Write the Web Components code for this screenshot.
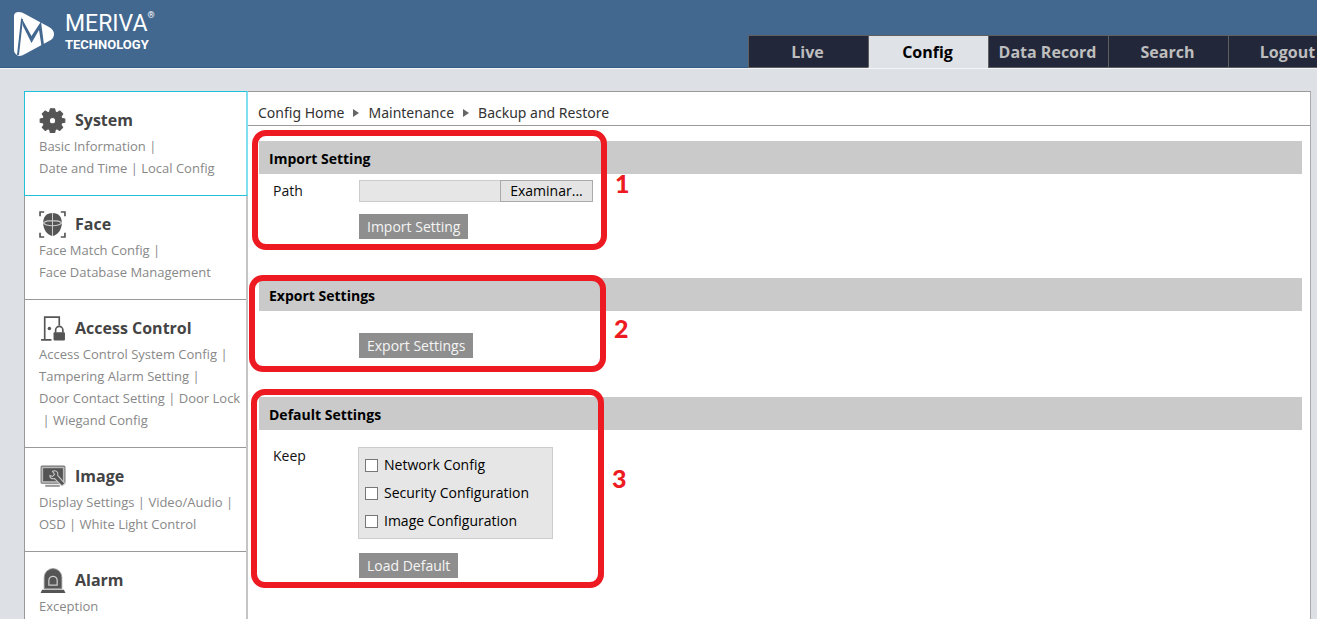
<!DOCTYPE html>
<html lang="en">
<head>
<meta charset="utf-8">
<title>Meriva Technology - Backup and Restore</title>
<style>
  html, body { height: 100%; }
  body {
    margin: 0; overflow: hidden; background: #dde0e5; color: #111;
    font: 14px/22px "Open Sans", "Noto Sans", sans-serif;
    display: flex; flex-direction: column;
  }
  config-layout { flex: 1; }
</style>
</head>
<body>
<app-header>
  <nav-tab>Live</nav-tab>
  <nav-tab current>Config</nav-tab>
  <nav-tab>Data Record</nav-tab>
  <nav-tab>Search</nav-tab>
  <nav-tab>Logout</nav-tab>
</app-header>

<config-layout>
  <side-group slot="side" label="System" links="Basic Information|/Date and Time|Local Config" active>
    <svg slot="icon" width="27" height="27" viewBox="0 0 26 26"><path fill="#555" fill-rule="evenodd" stroke="#555" stroke-linejoin="round" d="M10.900 1.800h4.200l.7 3 1.600.7 2.600-1.700 2.900 2.900-1.700 2.600.7 1.600 3 .7v3.200l-3 .7-.7 1.600 1.700 2.600-2.900 2.900-2.600-1.700-1.600.7-.7 3h-4.200l-.7-3-1.600-.7-2.600 1.700-2.900-2.900 1.700-2.600-.7-1.600-3-.7v-3.200l3-.7.7-1.600-1.700-2.600 2.900-2.900 2.600 1.700 1.600-.7zM13 10.200a3 3 0 1 0 0 6a3 3 0 1 0 0-6z"/></svg>
  </side-group>
  <side-group slot="side" label="Face" links="Face Match Config|/Face Database Management">
    <svg slot="icon" width="27" height="27" viewBox="0 0 26 26"><path fill="none" stroke="#555" stroke-width="1.600" d="M1 5V1h4M21 1h4v4M25 21v4h-4M5 25H1v-4"/><path fill="#555" d="M13 2c6 0 9 4 9 9.500 0 6-4 12-9 12.500-5-.5-9-6.500-9-12.500C4 6 7 2 13 2z"/><path fill="none" stroke="#ccc" stroke-width="1" d="M13 2v22M4 11.500c3 3.500 15 3.500 18 0M4 11.500c3-3 15-3 18 0"/></svg>
  </side-group>
  <side-group slot="side" label="Access Control" links="Access Control System Config|/Tampering Alarm Setting|/Door Contact Setting|Door Lock/|Wiegand Config">
    <svg slot="icon" width="27" height="27" viewBox="0 0 26 26"><path fill="none" stroke="#555" stroke-width="1.600" d="M2 24h10M5.500 24V2h14v8"/><circle cx="10" cy="13" r="1.700" fill="#555"/><path fill="none" stroke="#555" stroke-width="1.600" d="M16 17v-2.500a3.500 3.500 0 0 1 7 0V17"/><rect x="14" y="16.500" width="11" height="8" rx="1" fill="#555"/></svg>
  </side-group>
  <side-group slot="side" label="Image" links="Display Settings|Video/Audio|/OSD|White Light Control">
    <svg slot="icon" width="27" height="27" viewBox="0 0 26 26"><rect x="2" y="3" width="23" height="16.500" rx="1" fill="#bbb" stroke="#777"/><rect x="4" y="5" width="19" height="12.500" fill="#555"/><path d="M6 22h14" stroke="#999" stroke-width="2"/><path d="M13 8c3-1.500 6 .5 5 4l7 8-3 2-7-7c-2.500.8-5-.5-4.500-3l2.500 1 2-2z" fill="#555" stroke="#ccc"/></svg>
  </side-group>
  <side-group slot="side" label="Alarm" links="Exception">
    <svg slot="icon" width="27" height="27" viewBox="0 0 26 26"><path fill="#555" stroke="#999" stroke-width=".8" d="M5 21V10a8 8 0 0 1 17 0v11z"/><path fill="none" stroke="#ccc" stroke-width="1.200" d="M9.500 17.500V13a4 4 0 0 1 8 0v4.500z"/><path fill="#555" d="M3 22h21l1.500 3h-24z"/></svg>
  </side-group>

  <crumb-trail path="Config Home/Maintenance/Backup and Restore"></crumb-trail>
  <settings-section heading="Import Setting">
    <path-field label="Path" browse="Examinar..."></path-field>
    <action-button style="--gap: 12px">Import Setting</action-button>
    <call-out number="1" style="--l: -7px; --t: -11px; --w: 355px; --h: 120px; --nt: 32px"></call-out>
  </settings-section>
  <settings-section heading="Export Settings">
    <action-button style="--gap: 16px">Export Settings</action-button>
    <call-out number="2" style="--l: -10px; --t: -3px; --w: 357px; --h: 97px; --nt: 32px"></call-out>
  </settings-section>
  <settings-section heading="Default Settings">
    <keep-options label="Keep" options="Network Config/Security Configuration/Image Configuration"></keep-options>
    <action-button style="--gap: 14px">Load Default</action-button>
    <call-out number="3" style="--l: -8px; --t: -8px; --w: 353px; --h: 199px; --nt: 68px"></call-out>
  </settings-section>
</config-layout>

<script>
class Base extends HTMLElement {
  connectedCallback() {
    if (this.shadowRoot) return;
    this.attachShadow({ mode: "open" }).innerHTML = this.render();
  }
  get(name) { return this.getAttribute(name) || ""; }
}

customElements.define("app-header", class extends Base {
  render() { return `
    <style>
      :host { display: flex; justify-content: space-between; align-items: flex-end; height: 67px;
        background: #43688f; border-bottom: 1px solid #365a82; box-shadow: 0 1px #f3f5f7; }
      .brand { display: flex; gap: 10px; align-self: flex-start; padding: 12px 0 0 13px; color: #fff; font-family: Roboto, sans-serif; }
      .name { display: grid; align-content: start; gap: 2px; }
      .top { font-size: 23px; line-height: 24px; display: flex; align-items: flex-start; }
      sup { font-size: 9px; line-height: 7px; }
      .sub { font-size: 13px; line-height: 13px; font-weight: 700; }
      nav { display: flex; margin-right: -31px; margin-bottom: -1px; }
    </style>
    <div class="brand">
      <svg width="42" height="44" viewBox="0 0 42 44" aria-hidden="true">
        <path fill="#fff" d="M1 4Q1 0 6 0Q9 0 12 2L36 15Q41 18 41 22Q41 27 36 29L12 42Q9 44 6 44Q1 42 1 38z"/>
        <path fill="none" stroke="#43688f" stroke-width="2" stroke-linejoin="bevel" d="M5 43L9 7"/>
        <path fill="#43688f" d="M8 5L18.500 24L28 9.500L31 33L28.500 34L26 18L18.500 31L10 14z"/>
      </svg>
      <div class="name"><div class="top">MERIVA<sup>®</sup></div><div class="sub">TECHNOLOGY</div></div>
    </div>
    <nav><slot></slot></nav>`; }
});

customElements.define("nav-tab", class extends Base {
  render() { return `
    <style>
      :host { display: block; width: 120px; box-sizing: border-box; border: 1px solid #5f5f62; border-right-width: 0; background: #22283a; }
      :host([current]) { background: #dfe2e7; border-bottom-color: #dfe2e7; position: relative; z-index: 1; }
      a { display: block; text-align: center; color: #bebebe; text-decoration: none; font-size: 16px; line-height: 30px; font-weight: 700; padding: 1px 2px 0 0; }
      :host([current]) a { color: #000; }
    </style><a href="#"><slot></slot></a>`; }
});

customElements.define("config-layout", class extends Base {
  render() { return `
    <style>
      :host { display: grid; grid-template-columns: 224px 1fr; margin: 23px 6px 0 24px; min-height: 0; }
      aside { border-left: 1px solid #999; border-right: 2px solid #c4c4c4; background: #fff; min-height: 0; }
      main { background: #fff; border-top: 1px solid #999; border-right: 1px solid #aaa; min-height: 0; }
    </style>
    <aside><slot name="side"></slot></aside><main><slot></slot></main>`; }
});

customElements.define("side-group", class extends Base {
  render() {
    const lines = this.get("links").split("/").reduce((out, part) => {
      /* "Video/Audio" is one label, so its halves are joined again */
      if (part === "Audio|") out[out.length - 1] += "/" + part; else out.push(part);
      return out;
    }, []);
    const html = lines.map(line => {
      const parts = line.split("|");
      return "<div>" + parts.map(p => p ? `<a href="#">${p}</a>` : "").join(" | ").replace(/^ /, "&nbsp;") + "</div>";
    }).join("");
    return `
    <style>
      :host { display: block; padding: 14px 0 16px 14px; border-bottom: 1px solid #999; white-space: nowrap; }
      :host([active]) { position: relative; margin: 0 -2px 0 -1px; border: 1px solid #1fc0d8; border-right: 2px solid #7fdfee; }
      h2 { display: flex; align-items: center; gap: 9px; margin: 0; font-size: 16px; line-height: 29px; color: #444; }
      .links { font-size: 13px; line-height: 22px; color: #888; }
      a { color: inherit; text-decoration: none; }
      ::slotted(svg) { display: block; }
    </style>
    <h2><slot name="icon"></slot>${this.get("label")}</h2><div class="links">${html}</div>`;
  }
});

customElements.define("crumb-trail", class extends Base {
  render() { return `
    <style>
      :host { display: block; border-bottom: 1px solid #999; padding: 9px 0 1px 10px; color: #333; font-family: "Noto Sans", sans-serif; }
      nav { display: flex; align-items: center; gap: 8px; font-size: 14px; line-height: 23px; }
      a { color: inherit; text-decoration: none; }
      svg { display: block; }
    </style><nav>${this.get("path").split("/").map(p => `<a href="#">${p}</a>`)
      .join('<svg width="8" height="8" viewBox="0 0 8 8" aria-hidden="true"><path fill="#666" d="M1 0l6 4-6 4z"/></svg>')}</nav>`; }
});

customElements.define("settings-section", class extends Base {
  render() { return `
    <style>
      :host { display: block; position: relative; margin: 0 8px 0 11px; padding-bottom: 39px; }
      :host(:first-of-type) { margin-top: 15px; }
      h3 { margin: 0; padding: 3px 10px 1px; background: #cacaca; color: #000; font-size: 14px; line-height: 29px; }
      .body { padding: 6px 0 0 14px; }
    </style><h3>${this.get("heading")}</h3><div class="body"><slot></slot></div>`; }
});

customElements.define("path-field", class extends Base {
  render() { return `
    <style>
      :host { display: grid; grid-template-columns: 86px 141px 93px; align-items: center; }
      input, button { box-sizing: border-box; height: 22px; margin: 0; padding: 0; border-radius: 0; font: inherit; line-height: 20px; }
      input { width: 100%; border: 1px solid #ccc; border-right: 0; background: #e6e6e6; }
      button { border: 1px solid #aaa; background: #e4e4e4; color: #000; }
    </style><label for="path">${this.get("label")}</label><input id="path" type="text" readonly><button type="button">${this.get("browse")}</button>`; }
});

customElements.define("keep-options", class extends Base {
  render() { return `
    <style>
      :host { display: grid; grid-template-columns: 85px 195px; align-items: start; padding-top: 11px; }
      span { line-height: 18px; }
      .list { box-sizing: border-box; display: grid; gap: 6px; padding: 6px; border: 1px solid #ccc; background: #e6e6e6; }
      label { display: flex; align-items: center; gap: 6px; color: #000; }
      input { appearance: none; box-sizing: border-box; width: 13px; height: 13px; margin: 0; border: 1px solid #777; background: #fff; }
    </style><span id="keep">${this.get("label")}</span><div class="list" role="group" aria-labelledby="keep">${
      this.get("options").split("/").map(o => `<label><input type="checkbox">${o}</label>`).join("")}</div>`; }
});

customElements.define("action-button", class extends Base {
  render() { return `
    <style>
      :host { display: block; padding: var(--gap) 0 0 86px; }
      button { display: block; margin: 0; padding: 0 8px; height: 25px; border: 0; border-radius: 0; background: #8e8e8e; color: #f5f5f5; font: inherit; line-height: 24px; }
    </style><button type="button"><slot></slot></button>`; }
});

customElements.define("call-out", class extends Base {
  render() { return `
    <style>
      :host { position: absolute; left: var(--l); top: var(--t); width: var(--w); height: var(--h); box-sizing: border-box;
        border: 6px solid #ee1a22; border-radius: 14px; pointer-events: none; }
      b { position: absolute; left: 100%; top: var(--nt); margin-left: 14px; color: #ee1a22; font: 900 25px/30px Lato, sans-serif; }
    </style><b>${this.get("number")}</b>`; }
});
</script>
</body>
</html>
